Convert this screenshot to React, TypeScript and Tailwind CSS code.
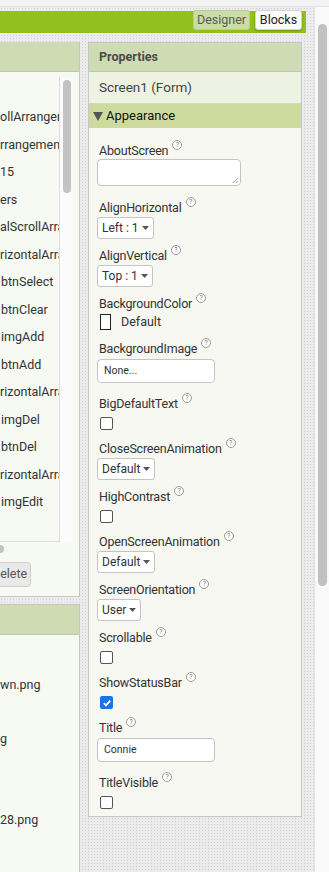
import React from 'react';

type Prop =
  | { name: string; kind: 'textarea' }
  | { name: string; kind: 'select'; value: string }
  | { name: string; kind: 'color'; value: string }
  | { name: string; kind: 'text'; value: string }
  | { name: string; kind: 'check'; checked?: boolean };

const PROPS: Prop[] = [
  { name: 'AboutScreen', kind: 'textarea' },
  { name: 'AlignHorizontal', kind: 'select', value: 'Left : 1' },
  { name: 'AlignVertical', kind: 'select', value: 'Top : 1' },
  { name: 'BackgroundColor', kind: 'color', value: 'Default' },
  { name: 'BackgroundImage', kind: 'text', value: 'None...' },
  { name: 'BigDefaultText', kind: 'check' },
  { name: 'CloseScreenAnimation', kind: 'select', value: 'Default' },
  { name: 'HighContrast', kind: 'check' },
  { name: 'OpenScreenAnimation', kind: 'select', value: 'Default' },
  { name: 'ScreenOrientation', kind: 'select', value: 'User' },
  { name: 'Scrollable', kind: 'check' },
  { name: 'ShowStatusBar', kind: 'check', checked: true },
  { name: 'Title', kind: 'text', value: 'Connie' },
  { name: 'TitleVisible', kind: 'check' },
];

const TREE = [
  'ollArrangement1',
  'rrangement2',
  '15',
  'ers',
  'alScrollArrangement1',
  'rizontalArrangement1',
  'btnSelect',
  'btnClear',
  'imgAdd',
  'btnAdd',
  'rizontalArrangement2',
  'imgDel',
  'btnDel',
  'rizontalArrangement3',
  'imgEdit',
];

const MEDIA = ['', 'wn.png', '', 'g', '', '', '28.png', ''];

const Help = () => (
  <span className="ml-[4px] -mt-[3px] w-[10px] h-[10px] rounded-full border border-[#9a9a9a] bg-white flex items-center justify-center text-[7px] leading-none text-[#777] shrink-0 tracking-normal">
    ?
  </span>
);

const Caret = () => (
  <svg width="7" height="4" viewBox="0 0 7 4" className="ml-[3px] shrink-0">
    <path d="M0 0h7L3.5 4z" fill="#555" />
  </svg>
);

const Checkbox = ({ checked }: { checked?: boolean }) =>
  checked ? (
    <span className="w-[13px] h-[13px] rounded-[2px] bg-[#1a73e8] flex items-center justify-center">
      <svg width="10" height="10" viewBox="0 0 10 10">
        <path d="M1.8 5.2l2.2 2.2 4.3-4.8" stroke="#fff" strokeWidth="1.8" fill="none" />
      </svg>
    </span>
  ) : (
    <span className="w-[13px] h-[13px] rounded-[2px] border border-[#555] bg-white block" />
  );

const PropertyRow = ({ p, last }: { p: Prop; last: boolean }) => {
  const pad = last
    ? 'pb-[7px]'
    : p.kind === 'select'
    ? 'pb-[9px]'
    : p.kind === 'check' || p.kind === 'color'
    ? 'pb-[11px]'
    : p.kind === 'textarea'
    ? 'pb-[14px]'
    : 'pb-[13px]';
  return (
    <div className={`flex flex-col ${pad}`}>
      <div className="flex items-start h-[16px] pl-[2px] leading-[16px] text-[12.5px] tracking-[-0.2px] text-[#333]">
        <span>{p.name}</span>
        <Help />
      </div>
      {p.kind === 'textarea' && (
        <div className="w-[144px] h-[27px] rounded-[4px] border border-[#c4c4c4] bg-white relative">
          <svg width="6" height="6" viewBox="0 0 6 6" className="absolute right-[2px] bottom-[2px]">
            <path d="M6 1L1 6M6 4L4 6" stroke="#888" strokeWidth="0.8" />
          </svg>
        </div>
      )}
      {p.kind === 'select' && (
        <div className="self-start mt-[1px] h-[22px] rounded-[3px] border border-[#c4c4c4] bg-white flex items-center pl-[4px] pr-[4px] text-[12px] leading-[16px] text-[#333] whitespace-nowrap">
          {p.value}
          <Caret />
        </div>
      )}
      {p.kind === 'color' && (
        <div className="mt-[2px] h-[16px] flex items-center pl-[3px] text-[12.5px] text-[#333]">
          <span className="w-[11px] h-[16px] border border-[#222] bg-white" />
          <span className="ml-[10px]">{p.value}</span>
        </div>
      )}
      {p.kind === 'text' && (
        <div className="mt-[2px] w-[118px] h-[24px] rounded-[4px] border border-[#c4c4c4] bg-white flex items-center pl-[6px] text-[10.5px] text-[#333]">
          {p.value}
        </div>
      )}
      {p.kind === 'check' && (
        <div className="mt-[5px] pl-[3px] h-[13px] flex">
          <Checkbox checked={p.checked} />
        </div>
      )}
    </div>
  );
};

export default function App() {
  const dotted =
    'bg-[#ececec] bg-[radial-gradient(#cfcfcf_0.7px,transparent_0.8px)] bg-[size:3px_3px]';
  return (
    <div className="w-[329px] h-[872px] overflow-hidden flex flex-col bg-[#f3f3f3] font-['Roboto','Liberation_Sans',sans-serif]">
      <div className="h-[7px] shrink-0 bg-[#f3f3f3] border-b border-[#e2e2e2]" />
      <div className="flex flex-1 min-h-0">
        <div className={`w-[314px] shrink-0 flex flex-col pt-[4px] ${dotted}`}>
          {/* toolbar */}
          <div className="w-[306px] h-[22px] shrink-0 bg-[#92c01f] flex justify-end items-start gap-[5px] pr-[4px]">
            <div className="-mt-[1px] w-[57px] h-[20px] rounded-[3px] bg-[#cadca8] border border-[#b9cd95] flex items-center justify-center text-[12.5px] text-[#5a5a5a]">
              Designer
            </div>
            <div className="-mt-[1px] w-[47px] h-[20px] rounded-[3px] bg-[#fbfbfb] border border-[#d5d5d5] shadow-[0_1px_2px_rgba(0,0,0,0.25)] flex items-center justify-center text-[12.5px] text-[#222]">
              Blocks
            </div>
          </div>

          <div className="flex gap-[8px] mt-[9px] flex-1 min-h-0 items-start">
            {/* left column */}
            <div className="w-[80px] shrink-0 flex flex-col gap-[7px] h-full">
              <div className="h-[555px] shrink-0 border-r border-b border-[#c6c6c6] bg-[#f7f9f3] flex flex-col overflow-hidden">
                <div className="h-[30px] shrink-0 bg-[#cfdcb3] border-b border-[#bfc9a8]" />
                <div className="flex mt-[5px] h-[465px]">
                  <div className="w-[60px] shrink-0 border-r border-b border-[#dcdcdc] overflow-hidden flex flex-col pt-[27px]">
                    {TREE.map((t, i) => (
                      <div key={i} className="h-[27.5px] shrink-0 flex items-center whitespace-nowrap text-[12.5px] text-[#333]" style={{ paddingLeft: /^(btn|img)/.test(t) ? 1 : 0 }}>
                        {t}
                      </div>
                    ))}
                  </div>
                  <div className="w-[13px] shrink-0 bg-[#fbfbfb] pt-[3px] flex justify-center">
                    <div className="w-[8px] h-[113px] rounded-full bg-[#c3c3c3]" />
                  </div>
                </div>
                <div className="h-[13px] flex items-center">
                  <div className="w-[4px] h-[8px] rounded-r-full bg-[#c3c3c3]" />
                </div>
                <div className="mt-[7px] flex">
                  <div className="-ml-[16px] h-[25px] pl-[7px] pr-[3px] rounded-[4px] border border-[#cfcfcf] bg-[#e9e9e9] flex items-center text-[12.5px] text-[#555]">
                    Delete
                  </div>
                </div>
              </div>
              <div className="flex-1 border-r border-t border-[#c6c6c6] bg-[#f7f9f3] flex flex-col overflow-hidden">
                <div className="h-[30px] shrink-0 bg-[#cfdcb3] border-b border-[#bfc9a8]" />
                <div className="pt-[10px] flex flex-col">
                  {MEDIA.map((t, i) => (
                    <div key={i} className="h-[27px] flex items-center whitespace-nowrap text-[12.5px] text-[#333]">
                      {t}
                    </div>
                  ))}
                </div>
              </div>
            </div>

            {/* properties */}
            <div className="w-[214px] shrink-0 border border-[#c6c6c6] bg-[#f6f8f1] flex flex-col">
              <div className="h-[29px] shrink-0 bg-[#cfdcb3] border-b border-[#bfc9a8] flex items-center pl-[10px] text-[12.5px] font-bold text-[#4a4a4a]">
                Properties
              </div>
              <div className="h-[32px] shrink-0 bg-[#eef2e3] border-b border-[#d3d8c6] flex items-center pl-[10px] text-[13.5px] text-[#444]">
                Screen1 (Form)
              </div>
              <div className="h-[24px] shrink-0 bg-[#cfdb9e] flex items-center pl-[4px] text-[13px] text-[#111]">
                <svg width="10" height="9" viewBox="0 0 10 9" className="mr-[3px]">
                  <path d="M0 0h10L5 9z" fill="#555" />
                </svg>
                Appearance
              </div>
              <div className="flex flex-col pl-[8px] pt-[15px]">
                {PROPS.map((p, i) => (
                  <PropertyRow key={p.name} p={p} last={i === PROPS.length - 1} />
                ))}
              </div>
            </div>
          </div>
        </div>

        {/* page scrollbar */}
        <div className="flex-1 bg-[#f9f9f9] border-l border-[#e3e3e3] pt-[17px] pl-[3px]">
          <div className="w-[9px] h-[562px] rounded-full bg-[#c1c1c1]" />
        </div>
      </div>
    </div>
  );
}
